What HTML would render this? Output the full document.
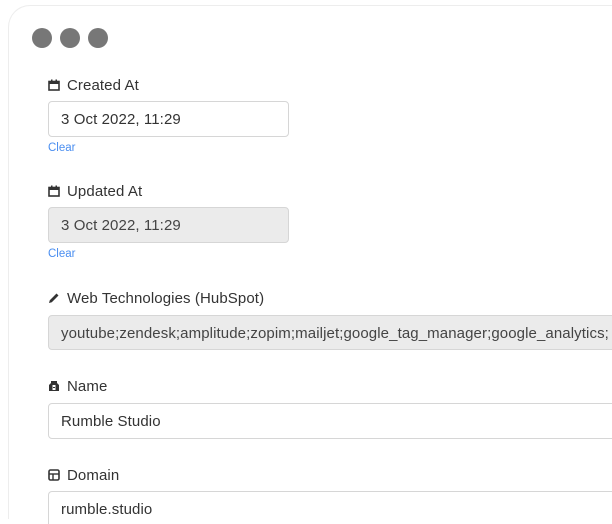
<!DOCTYPE html>
<html><head><meta charset="utf-8"><style>
*{box-sizing:border-box;margin:0;padding:0}
html,body{width:612px;height:524px;background:#fff;overflow:hidden;font-family:"Liberation Sans",sans-serif;color:#333}
.card{position:absolute;left:8px;top:5px;width:700px;height:514px;border:1px solid #ededed;border-bottom:none;border-radius:22px 22px 0 0;background:#fff}
.dot{position:absolute;top:28px;width:20px;height:20px;border-radius:50%;background:#777}
.lbl{position:absolute;left:48px;font-size:15px;letter-spacing:0.1px;color:#333;display:flex;align-items:center;gap:7px;height:18px}
.lbl svg{width:12px;height:12px}
.inp{position:absolute;left:48px;height:36px;border:1px solid #d6d6d6;border-radius:4px;background:#fff;font-size:15px;letter-spacing:0.1px;color:#333;padding:2px 12px 0;line-height:36px;white-space:nowrap;overflow:hidden}
.dis{background:#ebebeb;color:#444}
.clear{position:absolute;left:48px;font-size:11.5px;color:#4a8ef0}
</style></head><body>
<div class="card"></div>
<div class="dot" style="left:32px"></div>
<div class="dot" style="left:60px"></div>
<div class="dot" style="left:88px"></div>

<div class="lbl" style="top:76px"><svg viewBox="0 0 12 12"><rect x="1" y="2.5" width="10" height="8.5" fill="none" stroke="#333" stroke-width="1.6"/><rect x="1" y="2.5" width="10" height="2.5" fill="#333"/><rect x="3" y="0.5" width="1.5" height="3" fill="#333"/><rect x="7.5" y="0.5" width="1.5" height="3" fill="#333"/></svg>Created At</div>
<div class="inp" style="top:101px;width:241px;line-height:32px">3 Oct 2022, 11:29</div>
<div class="clear" style="top:142px">Clear</div>

<div class="lbl" style="top:182px"><svg viewBox="0 0 12 12"><rect x="1" y="2.5" width="10" height="8.5" fill="none" stroke="#333" stroke-width="1.6"/><rect x="1" y="2.5" width="10" height="2.5" fill="#333"/><rect x="3" y="0.5" width="1.5" height="3" fill="#333"/><rect x="7.5" y="0.5" width="1.5" height="3" fill="#333"/></svg>Updated At</div>
<div class="inp dis" style="top:207px;width:241px;line-height:32px">3 Oct 2022, 11:29</div>
<div class="clear" style="top:248px">Clear</div>

<div class="lbl" style="top:289px"><svg viewBox="0 0 12 12"><path d="M1 11 L1.8 8.2 L8.5 1.5 L10.5 3.5 L3.8 10.2 Z" fill="#333"/></svg>Web Technologies (HubSpot)</div>
<div class="inp dis" style="top:315px;width:600px;height:35px;line-height:31px">youtube;zendesk;amplitude;zopim;mailjet;google_tag_manager;google_analytics;</div>

<div class="lbl" style="top:377px"><svg viewBox="0 0 12 12"><path d="M1 11 V5 L3 3 V1 H9 V3 L11 5 V11 Z" fill="#333"/><rect x="4.5" y="5" width="3" height="5" fill="#fff"/><rect x="5" y="7" width="2" height="1" fill="#333"/></svg>Name</div>
<div class="inp" style="top:403px;width:600px;line-height:32px">Rumble Studio</div>

<div class="lbl" style="top:466px"><svg viewBox="0 0 12 12"><rect x="1" y="1" width="10" height="10" rx="1.5" fill="none" stroke="#333" stroke-width="1.6"/><line x1="1" y1="5" x2="11" y2="5" stroke="#333" stroke-width="1.4"/><line x1="5" y1="5" x2="5" y2="11" stroke="#333" stroke-width="1.4"/></svg>Domain</div>
<div class="inp" style="top:491px;width:600px;height:33px;border-bottom:none;border-radius:4px 4px 0 0;line-height:32px">rumble.studio</div>
</body></html>
